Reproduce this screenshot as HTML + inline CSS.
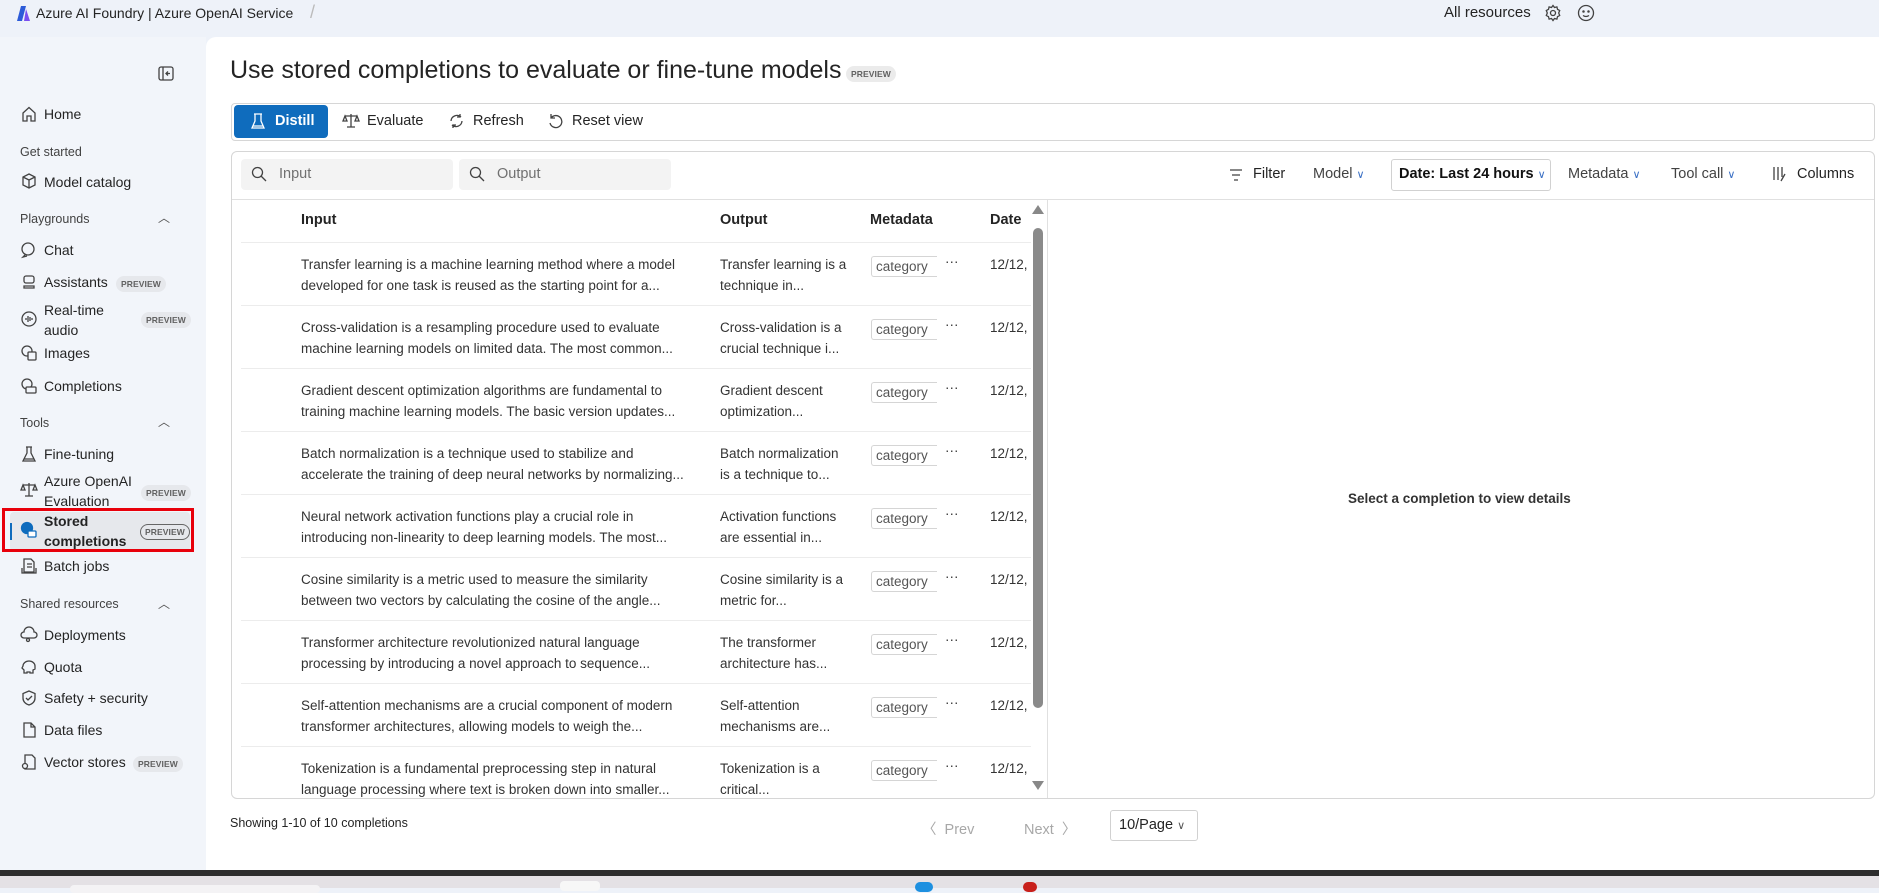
<!DOCTYPE html>
<html><head><meta charset="utf-8"><style>
*{box-sizing:border-box;margin:0;padding:0}
body{width:1879px;height:888px;overflow:hidden;background:#eef2f9;font-family:"Liberation Sans",sans-serif;color:#242424;position:relative}
.a{position:absolute;white-space:nowrap}
.side{position:absolute;left:0;top:37px;width:206px;height:833px;background:#f2f5fa}
.ni{position:absolute;left:44px;font-size:14px;color:#242424}
.ic{position:absolute;left:20px;width:18px;height:18px}
.sec{position:absolute;left:20px;font-size:12.5px;color:#424242}
.chev{position:absolute;left:158px;font-size:12px;color:#555}
.pv{position:absolute;font-size:8.5px;font-weight:bold;color:#616161;background:#e6e8ec;border-radius:9px;padding:3px 5px;letter-spacing:.1px}
.main{position:absolute;left:206px;top:37px;width:1673px;height:833px;background:#fff;border-top-left-radius:10px}
.row{position:absolute;left:241px;width:796px;height:63px;border-bottom:1px solid #ececec}
.row .t{position:absolute;font-size:13.5px;color:#333;line-height:21px;white-space:nowrap}
.cat{position:absolute;left:630px;top:13px;width:66px;height:21px;border:1px solid #d5d5d5;border-right:none;border-radius:3px 0 0 3px;font-size:13.5px;color:#555;padding:2px 4px;overflow:hidden}
svg{stroke:#424242;fill:none;stroke-width:1.3}
</style></head><body>
<svg class="a" style="left:16px;top:5px" width="16" height="17" viewBox="0 0 16 17"><path d="M5 1h5L6 16H1z" fill="#2d5bd8" stroke="none"/><path d="M10 4l4 12h-6z" fill="#7b4ff0" stroke="none"/></svg>
<div class="a" style="left:36px;top:5px;font-size:14px;color:#242424">Azure AI Foundry | Azure OpenAI Service</div>
<div class="a" style="left:310px;top:2px;font-size:18px;color:#bbb">/</div>
<div class="a" style="left:1444px;top:4px;font-size:15px;color:#242424">All resources</div>
<svg class="a" style="left:1544px;top:4px" width="18" height="18" viewBox="0 0 18 18"><circle cx="9" cy="9" r="2.5"/><path d="M9 1.5l1.5 2 2.4-.6.6 2.4 2.2 1.2-1 2.5 1 2.5-2.2 1.2-.6 2.4-2.4-.6L9 16.5l-1.5-2-2.4.6-.6-2.4L2.3 11.5l1-2.5-1-2.5 2.2-1.2.6-2.4 2.4.6z"/></svg>
<svg class="a" style="left:1577px;top:4px" width="18" height="18" viewBox="0 0 18 18"><circle cx="9" cy="9" r="7.5"/><circle cx="6.5" cy="7.5" r=".6" fill="#424242"/><circle cx="11.5" cy="7.5" r=".6" fill="#424242"/><path d="M6 11.5q3 2 6 0"/></svg>

<div class="side">
<svg class="a" style="left:158px;top:29px" width="16" height="15" viewBox="0 0 16 15"><rect x="1" y="1" width="14" height="13" rx="2"/><path d="M5 1v13M12 7.5H8m2-2l-2 2 2 2"/></svg>
<svg class="ic" style="top:68px" viewBox="0 0 18 18"><path d="M3 8l6-5.5L15 8v8h-4v-5H7v5H3z"/></svg><div class="ni" style="top:69px">Home</div>
<div class="sec" style="top:108px">Get started</div>
<svg class="ic" style="top:135px" viewBox="0 0 18 18"><path d="M9 2l6 3v8l-6 3-6-3V5zM3 5l6 3 6-3M9 8v8"/></svg><div class="ni" style="top:137px">Model catalog</div>
<div class="sec" style="top:175px">Playgrounds</div><div class="chev" style="top:172px">︿</div>
<svg class="ic" style="top:204px" viewBox="0 0 18 18"><circle cx="8" cy="8" r="6"/><path d="M5 14l-2 2 4-1"/></svg><div class="ni" style="top:205px">Chat</div>
<svg class="ic" style="top:236px" viewBox="0 0 18 18"><rect x="4" y="3" width="10" height="7" rx="2"/><path d="M4 13h10v2H4z"/></svg><div class="ni" style="top:237px">Assistants</div><div class="pv" style="left:116px;top:239px">PREVIEW</div>
<svg class="ic" style="top:273px" viewBox="0 0 18 18"><circle cx="9" cy="9" r="7"/><path d="M6 8v2M8 6v6M10 7v4M12 8v2"/></svg><div class="ni" style="top:263px;line-height:20px">Real-time<br>audio</div><div class="pv" style="left:141px;top:275px">PREVIEW</div>
<svg class="ic" style="top:307px" viewBox="0 0 18 18"><circle cx="7" cy="7" r="5"/><rect x="8" y="8" width="8" height="8" rx="1" fill="#f2f5fa"/></svg><div class="ni" style="top:308px">Images</div>
<svg class="ic" style="top:340px" viewBox="0 0 18 18"><circle cx="7" cy="7" r="5"/><rect x="6" y="10" width="10" height="6" rx="1" fill="#f2f5fa"/></svg><div class="ni" style="top:341px">Completions</div>
<div class="sec" style="top:379px">Tools</div><div class="chev" style="top:376px">︿</div>
<svg class="ic" style="top:408px" viewBox="0 0 18 18"><path d="M6 2h6M7 2v6l-4 8h12l-4-8V2M4 14h10"/></svg><div class="ni" style="top:409px">Fine-tuning</div>
<svg class="ic" style="top:444px" viewBox="0 0 18 18"><path d="M9 2v13M3 4h12M3 4l-2 5h4zM15 4l-2 5h4zM5 15h8"/></svg><div class="ni" style="top:434px;line-height:20px">Azure OpenAI<br>Evaluation</div><div class="pv" style="left:141px;top:448px">PREVIEW</div>
<div class="a" style="left:10px;top:475px;width:180px;height:39px;background:#e6e8ec;border-radius:4px"></div>
<div class="a" style="left:10px;top:486px;width:2px;height:17px;background:#0f6cbd"></div>
<svg class="ic" style="top:484px" viewBox="0 0 18 18"><circle cx="7" cy="7" r="5.5" fill="#0f6cbd" stroke="#0f6cbd"/><rect x="8" y="10" width="8" height="6" rx="1" stroke="#0f6cbd" fill="#fff"/></svg>
<div class="ni" style="top:474px;line-height:20px;font-weight:bold">Stored<br>completions</div>
<div class="pv" style="left:140px;top:487px;background:none;border:1px solid #666;padding:2px 4px">PREVIEW</div>
<div class="a" style="left:2px;top:471px;width:192px;height:44px;border:3px solid #e8000b"></div>
<svg class="ic" style="top:520px" viewBox="0 0 18 18"><path d="M4 2h7l3 3v10H4zM2 11v5h14v-5"/><path d="M7 7h5M7 10h5"/></svg><div class="ni" style="top:521px">Batch jobs</div>
<div class="sec" style="top:560px">Shared resources</div><div class="chev" style="top:558px">︿</div>
<svg class="ic" style="top:589px" viewBox="0 0 18 18"><path d="M4 12a3 3 0 010-6 5 5 0 0110 0 3 3 0 010 6z"/><circle cx="8" cy="14" r="1.5"/></svg><div class="ni" style="top:590px">Deployments</div>
<svg class="ic" style="top:621px" viewBox="0 0 18 18"><path d="M3 8a6 5 0 0112 0v3l-2 1v3h-3v-1H7v1H4v-3L2 10z"/></svg><div class="ni" style="top:622px">Quota</div>
<svg class="ic" style="top:652px" viewBox="0 0 18 18"><path d="M9 2l6 2.5v4.5c0 4-3 6-6 7-3-1-6-3-6-7V4.5z"/><path d="M6 9l2 2 4-4"/></svg><div class="ni" style="top:653px">Safety + security</div>
<svg class="ic" style="top:684px" viewBox="0 0 18 18"><path d="M4 2h7l4 4v10H4zM11 2v4h4"/></svg><div class="ni" style="top:685px">Data files</div>
<svg class="ic" style="top:716px" viewBox="0 0 18 18"><path d="M5 2h7l3 3v11H5z"/><circle cx="5" cy="13" r="2.5" fill="#f2f5fa"/></svg><div class="ni" style="top:717px">Vector stores</div><div class="pv" style="left:133px;top:719px">PREVIEW</div>
</div>

<div class="main"></div>
<div class="a" style="left:230px;top:56px;font-size:25px;color:#242424">Use stored completions to evaluate or fine-tune models</div>
<div class="pv" style="left:846px;top:66px;background:#ebebeb">PREVIEW</div>

<div class="a" style="left:231px;top:103px;width:1644px;height:38px;border:1px solid #d6d6d6;border-radius:4px"></div>
<div class="a" style="left:234px;top:105px;width:94px;height:33px;background:#0f6cbd;border-radius:4px"></div>
<svg class="a" style="left:250px;top:112px;stroke:#fff" width="16" height="18" viewBox="0 0 16 18"><path d="M4 2h8M5 2v7l-3 7h12l-3-7V2M3 14h10"/></svg>
<div class="a" style="left:275px;top:113px;font-size:14.5px;font-weight:bold;color:#fff">Distill</div>
<svg class="a" style="left:342px;top:112px" width="18" height="18" viewBox="0 0 18 18"><path d="M9 2v13M3 4h12M3 4l-2 5h4zM15 4l-2 5h4zM5 15h8"/></svg>
<div class="a" style="left:367px;top:113px;font-size:14.5px">Evaluate</div>
<svg class="a" style="left:448px;top:112px" width="17" height="18" viewBox="0 0 17 18"><path d="M13 5a6 6 0 00-10 4M4 13a6 6 0 0010-4M12 2v3h-3M5 16v-3h3"/></svg>
<div class="a" style="left:473px;top:113px;font-size:14.5px">Refresh</div>
<svg class="a" style="left:547px;top:112px" width="17" height="18" viewBox="0 0 17 18"><path d="M4 6a6 6 0 11-1 5M4 2v4h4"/></svg>
<div class="a" style="left:572px;top:113px;font-size:14.5px">Reset view</div>

<div class="a" style="left:231px;top:151px;width:1644px;height:648px;border:1px solid #d6d6d6;border-radius:6px"></div>
<div class="a" style="left:241px;top:159px;width:212px;height:31px;background:#f3f3f3;border-radius:4px"></div>
<div class="a" style="left:459px;top:159px;width:212px;height:31px;background:#f3f3f3;border-radius:4px"></div>
<svg class="a" style="left:251px;top:166px" width="16" height="16" viewBox="0 0 16 16"><circle cx="6.5" cy="6.5" r="5"/><path d="M10 10l5 5"/></svg>
<div class="a" style="left:279px;top:166px;font-size:14.5px;color:#707070">Input</div>
<svg class="a" style="left:469px;top:166px" width="16" height="16" viewBox="0 0 16 16"><circle cx="6.5" cy="6.5" r="5"/><path d="M10 10l5 5"/></svg>
<div class="a" style="left:497px;top:166px;font-size:14.5px;color:#707070">Output</div>

<svg class="a" style="left:1228px;top:168px" width="16" height="14" viewBox="0 0 16 14"><path d="M2 2h12M4 7h8M6 12h4"/></svg>
<div class="a" style="left:1253px;top:166px;font-size:14.5px">Filter</div>
<div class="a" style="left:1313px;top:166px;font-size:14.5px;color:#424242">Model <span style="color:#3a6fc4;font-size:11px">&#8744;</span></div>
<div class="a" style="left:1391px;top:159px;width:160px;height:32px;border:1px solid #d1d1d1;border-radius:3px"></div>
<div class="a" style="left:1399px;top:166px;font-size:14.5px;font-weight:bold;color:#111">Date: Last 24 hours <span style="color:#3a6fc4;font-size:11px;font-weight:normal">&#8744;</span></div>
<div class="a" style="left:1568px;top:166px;font-size:14.5px;color:#424242">Metadata <span style="color:#3a6fc4;font-size:11px">&#8744;</span></div>
<div class="a" style="left:1671px;top:166px;font-size:14.5px;color:#424242">Tool call <span style="color:#3a6fc4;font-size:11px">&#8744;</span></div>
<svg class="a" style="left:1772px;top:165px" width="16" height="18" viewBox="0 0 16 18"><path d="M2 2v13M6 2v13M10 2v10M13 9l-4 7"/></svg>
<div class="a" style="left:1797px;top:166px;font-size:14.5px">Columns</div>

<div class="a" style="left:232px;top:199px;width:1642px;height:1px;background:#e0e0e0"></div>
<div class="a" style="left:1047px;top:199px;width:1px;height:599px;background:#e0e0e0"></div>
<div class="a" style="left:301px;top:212px;font-size:14.5px;font-weight:bold">Input</div>
<div class="a" style="left:720px;top:212px;font-size:14.5px;font-weight:bold">Output</div>
<div class="a" style="left:870px;top:212px;font-size:14.5px;font-weight:bold">Metadata</div>
<div class="a" style="left:990px;top:212px;font-size:14.5px;font-weight:bold">Date</div>
<div class="a" style="left:1032px;top:205px;width:0;height:0;border-left:6px solid transparent;border-right:6px solid transparent;border-bottom:9px solid #888"></div>
<div class="a" style="left:1033px;top:228px;width:10px;height:480px;background:#8a8a8a;border-radius:5px"></div>
<div class="a" style="left:1032px;top:781px;width:0;height:0;border-left:6px solid transparent;border-right:6px solid transparent;border-top:9px solid #888"></div>

<div style="position:absolute;left:0;top:0;width:1031px;height:798px;overflow:hidden">
<div class="row" style="top:180px"></div>
<div class="row" style="top:243px"><div class="t" style="left:60px;top:11px">Transfer learning is a machine learning method where a model<br>developed for one task is reused as the starting point for a...</div><div class="t" style="left:479px;top:11px">Transfer learning is a<br>technique in...</div><div class="cat">category :</div><div class="t" style="left:704px;top:8px">···</div><div class="t" style="left:749px;top:11px">12/12,</div></div>
<div class="row" style="top:306px"><div class="t" style="left:60px;top:11px">Cross-validation is a resampling procedure used to evaluate<br>machine learning models on limited data. The most common...</div><div class="t" style="left:479px;top:11px">Cross-validation is a<br>crucial technique i...</div><div class="cat">category :</div><div class="t" style="left:704px;top:8px">···</div><div class="t" style="left:749px;top:11px">12/12,</div></div>
<div class="row" style="top:369px"><div class="t" style="left:60px;top:11px">Gradient descent optimization algorithms are fundamental to<br>training machine learning models. The basic version updates...</div><div class="t" style="left:479px;top:11px">Gradient descent<br>optimization...</div><div class="cat">category :</div><div class="t" style="left:704px;top:8px">···</div><div class="t" style="left:749px;top:11px">12/12,</div></div>
<div class="row" style="top:432px"><div class="t" style="left:60px;top:11px">Batch normalization is a technique used to stabilize and<br>accelerate the training of deep neural networks by normalizing...</div><div class="t" style="left:479px;top:11px">Batch normalization<br>is a technique to...</div><div class="cat">category :</div><div class="t" style="left:704px;top:8px">···</div><div class="t" style="left:749px;top:11px">12/12,</div></div>
<div class="row" style="top:495px"><div class="t" style="left:60px;top:11px">Neural network activation functions play a crucial role in<br>introducing non-linearity to deep learning models. The most...</div><div class="t" style="left:479px;top:11px">Activation functions<br>are essential in...</div><div class="cat">category :</div><div class="t" style="left:704px;top:8px">···</div><div class="t" style="left:749px;top:11px">12/12,</div></div>
<div class="row" style="top:558px"><div class="t" style="left:60px;top:11px">Cosine similarity is a metric used to measure the similarity<br>between two vectors by calculating the cosine of the angle...</div><div class="t" style="left:479px;top:11px">Cosine similarity is a<br>metric for...</div><div class="cat">category :</div><div class="t" style="left:704px;top:8px">···</div><div class="t" style="left:749px;top:11px">12/12,</div></div>
<div class="row" style="top:621px"><div class="t" style="left:60px;top:11px">Transformer architecture revolutionized natural language<br>processing by introducing a novel approach to sequence...</div><div class="t" style="left:479px;top:11px">The transformer<br>architecture has...</div><div class="cat">category :</div><div class="t" style="left:704px;top:8px">···</div><div class="t" style="left:749px;top:11px">12/12,</div></div>
<div class="row" style="top:684px"><div class="t" style="left:60px;top:11px">Self-attention mechanisms are a crucial component of modern<br>transformer architectures, allowing models to weigh the...</div><div class="t" style="left:479px;top:11px">Self-attention<br>mechanisms are...</div><div class="cat">category :</div><div class="t" style="left:704px;top:8px">···</div><div class="t" style="left:749px;top:11px">12/12,</div></div>
<div class="row" style="top:747px;border:none"><div class="t" style="left:60px;top:11px">Tokenization is a fundamental preprocessing step in natural<br>language processing where text is broken down into smaller...</div><div class="t" style="left:479px;top:11px">Tokenization is a<br>critical...</div><div class="cat">category :</div><div class="t" style="left:704px;top:8px">···</div><div class="t" style="left:749px;top:11px">12/12,</div></div>
</div>

<div class="a" style="left:1348px;top:491px;font-size:13.5px;font-weight:bold;color:#333">Select a completion to view details</div>

<div class="a" style="left:230px;top:816px;font-size:12.5px;color:#242424">Showing 1-10 of 10 completions</div>
<div class="a" style="left:922px;top:818px;font-size:14.5px;color:#a8a8a8">〈&nbsp; Prev</div>
<div class="a" style="left:1024px;top:818px;font-size:14.5px;color:#a8a8a8">Next &nbsp;〉</div>
<div class="a" style="left:1110px;top:810px;width:88px;height:31px;border:1px solid #d1d1d1;border-radius:3px"></div>
<div class="a" style="left:1119px;top:817px;font-size:14.5px;color:#242424">10/Page <span style="font-size:11px;color:#555">&#8744;</span></div>

<div class="a" style="left:0;top:870px;width:1879px;height:6px;background:#2d2d2d"></div>
<div class="a" style="left:0;top:876px;width:1879px;height:12px;background:#e4e1e5"></div>
<div class="a" style="left:70px;top:885px;width:250px;height:8px;background:#f4f3f5;border-radius:6px"></div>
<div class="a" style="left:560px;top:881px;width:40px;height:10px;background:#f7f7f7;border-radius:4px"></div>
<div class="a" style="left:915px;top:882px;width:18px;height:10px;background:#1e90e0;border-radius:9px"></div>
<div class="a" style="left:1023px;top:882px;width:14px;height:10px;background:#c8201b;border-radius:9px"></div>
</body></html>
